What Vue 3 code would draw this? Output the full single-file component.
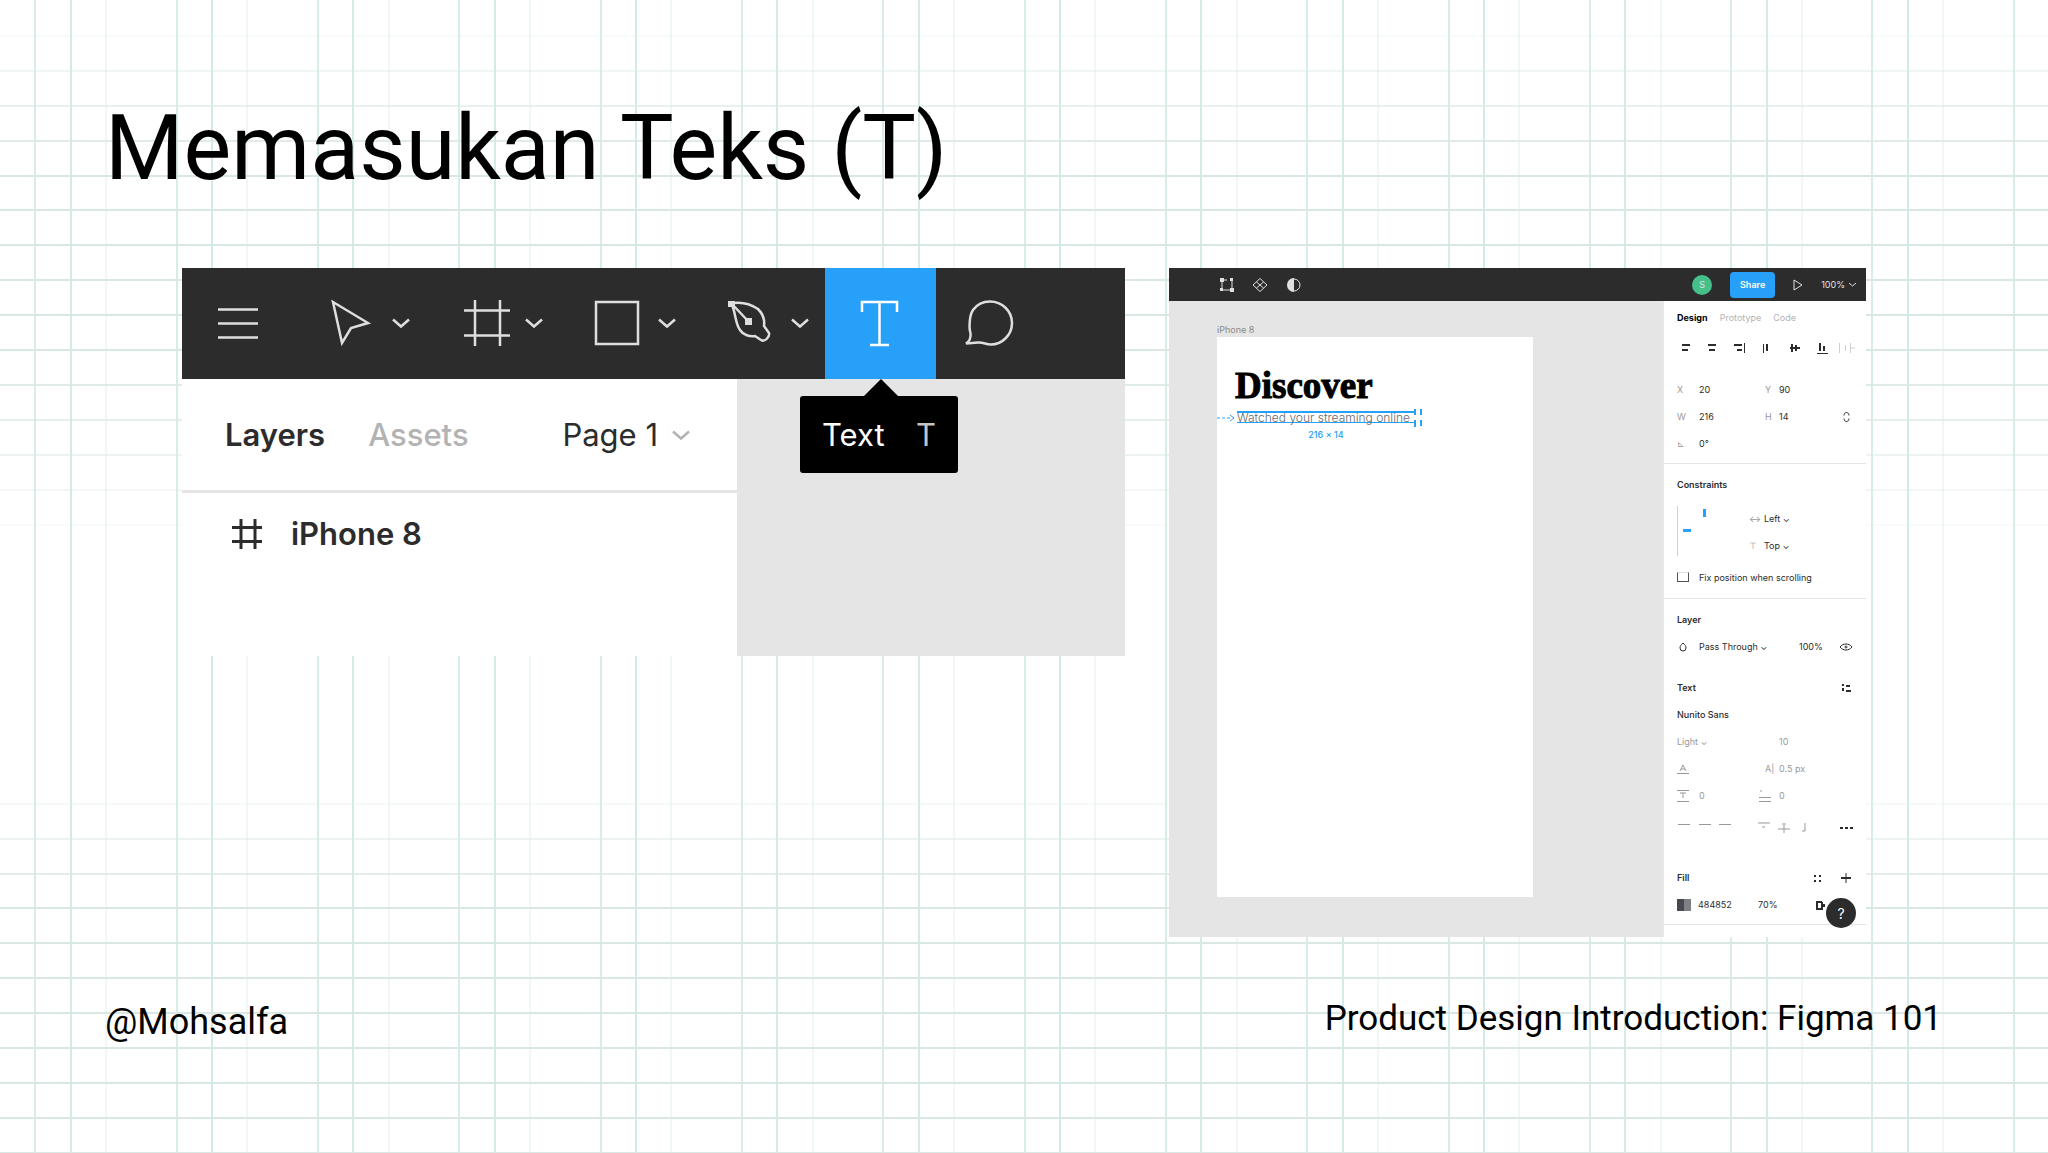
<template>
    <main class="slide">
        <svg class="grid-paper" viewBox="0 0 2048 1153" preserveAspectRatio="none" aria-hidden="true">
            <rect v-for="line in columns" :key="'c' + line.pos" :x="line.pos" y="0" width="2" height="1153"
                fill="#d3ebe7" :opacity="line.opacity" />
            <rect v-for="line in rows" :key="'r' + line.pos" x="0" :y="line.pos" width="2048" height="2"
                fill="#d9e7e5" :opacity="line.opacity" />
        </svg>

        <h1 class="title">Memasukan Teks (T)</h1>

        <div class="shots">
            <section class="editor">
                <div class="toolbar">
                    <button class="tool tool-menu" aria-label="Menu">
                        <svg class="icon" viewBox="0 0 48 48">
                            <path d="M4 10.5h40M4 24.5h40M4 38.5h40" />
                        </svg>
                    </button>
                    <button v-for="tool in tools" :key="tool.name" class="tool tool-group" :aria-label="tool.name">
                        <svg class="icon" viewBox="0 0 48 48">
                            <path :d="tool.path" />
                            <path v-if="tool.solid" class="solid" :d="tool.solid" />
                        </svg>
                        <svg class="chevron" viewBox="0 0 18 10">
                            <path d="M1 1.5l8 7 8-7" />
                        </svg>
                    </button>
                    <button class="tool tool-active" aria-label="Text">
                        <svg class="icon" viewBox="0 0 48 48">
                            <path d="M5 13V3h35v10M22.5 3v43M13 46h19" />
                        </svg>
                        <span class="tooltip">
                            <span>Text</span>
                            <span class="tooltip-key">T</span>
                        </span>
                    </button>
                    <button class="tool tool-comment" aria-label="Comment">
                        <svg class="icon" viewBox="0 0 48 48">
                            <path d="M-2 44.500C2 42 3 38 2.500 34 1 30 1 17 5 11 10 4 16 2.500 22 2.500 34 2.500 44 12 44 24S34 45.500 23 45.500C18 45.500 15 43 10 43.500z" />
                        </svg>
                    </button>
                </div>
                <div class="editor-body">
                    <div class="layers">
                        <div class="layers-tabs">
                            <button class="tab tab-current">Layers</button>
                            <button class="tab">Assets</button>
                            <button class="tab tab-page">
                                Page 1
                                <svg class="chevron" viewBox="0 0 18 10">
                                    <path d="M1 1.5l8 7 8-7" />
                                </svg>
                            </button>
                        </div>
                        <div class="layer">
                            <svg class="layer-icon" viewBox="0 0 30 30">
                                <path d="M0 8.5h30M0 22.5h30M9 0v30M23 0v30" />
                            </svg>
                            iPhone 8
                        </div>
                    </div>
                    <div class="stage"></div>
                </div>
            </section>

            <section class="figma">
                <div class="bar">
                    <svg class="bar-icons" viewBox="0 0 82 16">
                        <path d="M3 4v8M4 13h8M13 3v9M4 3h4" />
                        <path class="fill" d="M1 1h4v4H1zM1 11h3v3H1zM11 11h4v4h-4zM11 1h3v3h-3z" />
                        <path d="M41 1.5l7 6.5-7 6.5L34 8zM37.5 5l7 6M44.5 5l-7 6" />
                        <circle cx="75" cy="8" r="6" />
                        <path class="fill" d="M75 1a7 7 0 0 0 0 14z" />
                    </svg>
                    <span class="avatar">S</span>
                    <button class="share">Share</button>
                    <svg class="play" viewBox="0 0 10 12">
                        <path d="M1 1l8 5-8 5z" />
                    </svg>
                    <button class="zoom">
                        100%
                        <svg class="chevron-small" viewBox="0 0 7 4">
                            <path d="M0 0l3.5 3L7 0" />
                        </svg>
                    </button>
                </div>
                <div class="figma-body">
                    <div class="canvas">
                        <span class="frame-name">iPhone 8</span>
                        <div class="frame">
                            <h2 class="discover">Discover</h2>
                            <p class="selection">
                                Watched your streaming online
                                <svg class="arrow" viewBox="0 0 18 8">
                                    <path d="M0 4h13" stroke-dasharray="3 2" />
                                    <path d="M13 1l4 3-4 3" />
                                </svg>
                                <svg class="handles" viewBox="0 0 10 20">
                                    <path d="M2 1v6M8 1v6M2 12v7M8 12v6" />
                                </svg>
                            </p>
                            <span class="dimensions">216 × 14</span>
                        </div>
                    </div>

                    <aside class="inspector">
                        <section class="group">
                            <div class="inspector-tabs">
                                <button class="strong">Design</button>
                                <button>Prototype</button>
                                <button>Code</button>
                            </div>
                            <svg class="align" viewBox="0 0 178 12">
                                <path class="bold" d="M5 3h8M5 8h6M31 3h8M32 8h6M57 3h8M60 8h5M90 2v7M113 6h10M115 2v8M119 3v6M143 1v8M147 4v5" />
                                <path d="M67.5 1v10M86.5 2v9M140 11.5h11" />
                                <path class="pale" d="M162.5 1v10M168.5 3v6M173.5 1v10M174 6h4" />
                            </svg>
                            <div class="row">
                                <label class="hint" for="pos-x">X</label>
                                <input id="pos-x" v-model="box.x" />
                                <label class="hint" for="pos-y">Y</label>
                                <input id="pos-y" v-model="box.y" />
                            </div>
                            <div class="row">
                                <label class="hint" for="size-w">W</label>
                                <input id="size-w" v-model="box.w" />
                                <label class="hint" for="size-h">H</label>
                                <input id="size-h" v-model="box.h" />
                                <svg class="glyph" viewBox="0 0 12 12">
                                    <path d="M3 4.500c0-4 5-4 5 0M3 7.500c0 4 5 4 5 0" />
                                </svg>
                            </div>
                            <div class="row">
                                <label class="hint" for="angle">⊾</label>
                                <input id="angle" v-model="box.angle" />
                            </div>
                        </section>

                        <section class="group group-constraints">
                            <h3>Constraints</h3>
                            <div class="constraints">
                                <svg class="constraint-box" viewBox="0 0 54 52">
                                    <path class="pale" d="M.5 1v50" />
                                    <path class="blue" d="M27.5 4v8M6 25.5h8" />
                                </svg>
                                <div class="constraint-fields">
                                    <label>
                                        <span class="hint">↔</span>
                                        <select aria-label="Horizontal">
                                            <option>Left ⌄</option>
                                        </select>
                                    </label>
                                    <label>
                                        <span class="hint">⊤</span>
                                        <select aria-label="Vertical">
                                            <option>Top ⌄</option>
                                        </select>
                                    </label>
                                </div>
                            </div>
                            <label class="fix">
                                <input v-model="fixed" type="checkbox" />
                                Fix position when scrolling
                            </label>
                        </section>

                        <section class="group group-plain">
                            <h3>Layer</h3>
                            <div class="row row-layer">
                                <svg class="glyph" viewBox="0 0 12 12">
                                    <path d="M6 2c2 2 3 3 3 5a3 3 0 0 1-6 0c0-2 1-3 3-5z" />
                                </svg>
                                <select aria-label="Blend mode">
                                    <option>Pass Through ⌄</option>
                                </select>
                                <input v-model="opacity" aria-label="Opacity" />
                                <svg class="glyph" viewBox="0 0 12 12">
                                    <path d="M0 6c3-4 9-4 12 0-3 4-9 4-12 0z" />
                                    <circle cx="6" cy="6" r="1" />
                                </svg>
                            </div>
                        </section>

                        <section class="group group-plain">
                            <div class="row row-head">
                                <h3>Text</h3>
                                <svg class="glyph" viewBox="0 0 12 12">
                                    <path class="bold" d="M3 2v2M3 6v3M6 4h4M6 9h5" />
                                </svg>
                            </div>
                            <div class="row row-name">Nunito Sans</div>
                            <div class="row row-pale">
                                <select class="wide" aria-label="Weight">
                                    <option>Light ⌄</option>
                                </select>
                                <span></span>
                                <input v-model="type.size" aria-label="Font size" />
                            </div>
                            <div class="row row-pale">
                                <svg class="glyph" viewBox="0 0 12 12">
                                    <path d="M3 8l3-6 3 6M4 6h4M0 10.5h12" />
                                </svg>
                                <span></span>
                                <label for="spacing">A|</label>
                                <input id="spacing" v-model="type.spacing" />
                            </div>
                            <div class="row row-pale">
                                <svg class="glyph" viewBox="0 0 12 12">
                                    <path d="M0 .5h12M0 11.5h12M3 3h6M6 3v5" />
                                </svg>
                                <input v-model="type.gap" aria-label="Paragraph gap" />
                                <svg class="glyph glyph-out" viewBox="0 0 12 12">
                                    <path d="M1 1h2M0 7.5h12M0 11.5h12" />
                                </svg>
                                <input v-model="type.indent" aria-label="Indent" />
                            </div>
                            <svg class="align text-align" viewBox="0 0 178 12">
                                <path class="mid" d="M1 3.5h12M22 3.5h12M42 3.5h12M81 2h12M85 6h3M101 8h12M107 4v8M105 3h4M128 2v8M125 10h3" />
                                <path class="dots" d="M163 7h3M168 7h3M173 7h3" />
                            </svg>
                        </section>

                        <section class="group group-fill">
                            <div class="row row-head">
                                <h3>Fill</h3>
                                <svg class="glyph glyph-wide" viewBox="0 0 40 12">
                                    <path class="dots" d="M2 4h2M7 4h2M2 9h2M7 9h2M29 6h10" />
                                    <path d="M34 1v10" />
                                </svg>
                            </div>
                            <div class="row row-fill">
                                <span class="swatch"></span>
                                <input v-model="fill.color" aria-label="Fill colour" />
                                <input v-model="fill.alpha" aria-label="Fill opacity" />
                                <svg class="glyph" viewBox="0 0 12 12">
                                    <path class="bold" d="M1 3h6M2 3v7h5V3M9 5v3" />
                                </svg>
                            </div>
                            <button class="help">?</button>
                        </section>
                    </aside>
                </div>
            </section>
        </div>

        <footer class="footer">
            <span>@Mohsalfa</span>
            <span class="course">Product Design Introduction: Figma 101</span>
        </footer>
    </main>
</template>

<script setup>
import { reactive, ref } from 'vue';

const tools = [
    { name: 'Move', path: 'M3 3l35 21-17 5-9 15z' },
    { name: 'Frame', path: 'M1 11.5h46M1 36.5h46M12 1v46M37 1v46' },
    { name: 'Rectangle', path: 'M0 3h42v42H0z' },
    {
        name: 'Pen',
        path: 'M3 5l16 17M5 4c9-1 18 2 24 6 5 5 7 10 6 17l5 7c1 5-5 9-8 7l-6-4c-5 1-12-1-15-6C6 24 7 15 3 6',
        solid: 'M-1 2h7v6h-7zM16 19h7v7h-7z'
    }
];

const box = reactive({ x: '20', y: '90', w: '216', h: '14', angle: '0°' });
const type = reactive({ size: '10', spacing: '0.5 px', gap: '0', indent: '0' });
const fill = reactive({ color: '484852', alpha: '70%' });
const opacity = ref('100%');
const fixed = ref(false);

// vertical lines come in fours: two strong, one faint, one missing
const strength = [0, 0.9, 1, 0.35];
const columns = [];
for (let i = 1; i < 58; i++) {
    const value = strength[i % 4];
    if (value) {
        columns.push({ pos: Math.round(i * 35.33) - 1, opacity: value });
    }
}

// horizontal lines fade out around the middle of the paper
const rows = [];
for (let i = 1; i < 34; i++) {
    const pos = Math.round(i * 34.9);
    let value = 1;
    if (i < 5) value = i / 5;
    if (i > 10) value = Math.max(0, 1 - (i - 10) / 6);
    if (i > 22) value = Math.min(1, (i - 22) / 4);
    if (value > 0) {
        rows.push({ pos, opacity: value });
    }
}
</script>

<style>
body {
    margin: 0;
    background: #fff;
}
</style>

<style scoped>
* {
    box-sizing: border-box;
}

.slide {
    position: relative;
    display: flex;
    flex-direction: column;
    min-height: 100vh;
    overflow: hidden;
    color: #000;
    font-family: Roboto, sans-serif;
}

svg {
    display: block;
    flex: none;
    overflow: visible;
    fill: none;
    stroke: currentColor;
}

.grid-paper {
    position: absolute;
    inset: 0;
    z-index: -1;
    width: 100%;
    height: 100%;
    stroke: none;
}

button,
input,
select {
    margin: 0;
    padding: 0;
    border: 0;
    background: none;
    color: inherit;
    font: inherit;
}

select {
    appearance: none;
}

input {
    width: 100%;
    min-width: 0;
}

h1,
h2,
h3,
p {
    margin: 0;
}

.title {
    padding: 96px 105px 67px;
    font-size: 90px;
    font-weight: 400;
    line-height: 105px;
}

.shots {
    display: grid;
    grid-template-columns: 943fr 697fr;
    align-items: start;
    gap: 44px;
    padding: 0 182px;
}

/* zoomed-in editor */
.editor {
    background: #fff;
    color: #2c2c2c;
    font-family: Inter, sans-serif;
    font-size: 31px;
}

.toolbar {
    display: flex;
    height: 111px;
    background: #2c2c2c;
    color: #dedede;
}

.tool {
    position: relative;
    display: flex;
    align-items: center;
    justify-content: center;
    width: 111px;
    padding-bottom: 2px;
}

.tool-group {
    justify-content: flex-start;
    gap: 14px;
    width: 133px;
    padding-left: 37px;
}

.tool-active {
    background: #26a0f8;
    color: #fff;
}

.icon {
    width: 48px;
    height: 48px;
    stroke-width: 2.5;
}

.solid {
    fill: currentColor;
    stroke: none;
}

.chevron {
    width: 18px;
    height: 10px;
    stroke-width: 2.5;
}

.tooltip {
    position: absolute;
    top: 128px;
    left: -25px;
    z-index: 1;
    display: flex;
    align-items: center;
    justify-content: space-between;
    width: 158px;
    height: 77px;
    padding: 0 22px;
    border-radius: 3px;
    background: #000;
    color: #fff;
}

.tooltip::before {
    content: '';
    position: absolute;
    top: -17px;
    left: 64px;
    border: 17px solid transparent;
    border-top: 0;
    border-bottom-color: #000;
}

.tooltip-key {
    color: #c4c4c4;
}

.editor-body {
    display: grid;
    grid-template-columns: 555fr 388fr;
    min-height: 277px;
}

.stage {
    background: #e5e5e5;
}

.layers-tabs {
    display: flex;
    align-items: center;
    height: 114px;
    padding: 0 47px 0 43px;
    border-bottom: 3px solid #e5e5e5;
}

.tab {
    margin-right: 43px;
    color: #b3b3b3;
    font-weight: 500;
}

.tab-current {
    color: #2c2c2c;
    font-weight: 600;
}

.tab-page {
    display: flex;
    align-items: center;
    gap: 14px;
    margin: 0 0 0 auto;
    color: #2c2c2c;
    font-weight: 400;
}

.tab-page .chevron {
    color: #b3b3b3;
}

.layer {
    display: flex;
    align-items: center;
    gap: 29px;
    height: 81px;
    padding-left: 50px;
    font-weight: 600;
}

.layer-icon {
    width: 30px;
    height: 30px;
    stroke-width: 3;
}

/* full figma window */
.figma {
    background: #fff;
    font-family: Inter, sans-serif;
    font-size: 9px;
}

.bar {
    display: flex;
    align-items: center;
    height: 33px;
    padding: 0 10px 0 50px;
    background: #2c2c2c;
    color: #e0e0e0;
}

.bar-icons {
    width: 82px;
    height: 16px;
}

.fill {
    fill: currentColor;
    stroke: none;
}

.avatar {
    width: 20px;
    margin-left: auto;
    border-radius: 50%;
    background: #45c08a;
    line-height: 20px;
    text-align: center;
}

.share {
    width: 45px;
    height: 26px;
    margin: 0 18px;
    border-radius: 4px;
    background: #26a0f8;
    color: #fff;
    font-weight: 600;
}

.play {
    width: 10px;
    height: 12px;
}

.zoom {
    display: flex;
    align-items: center;
    gap: 4px;
    margin-left: 18px;
}

.chevron-small {
    width: 7px;
    height: 4px;
}

.figma-body {
    display: grid;
    grid-template-columns: 1fr 204px;
}

.canvas {
    display: flex;
    flex-direction: column;
    padding: 21px 129px 40px 48px;
    background: #e5e5e5;
}

.frame-name {
    color: #8a8a8a;
    line-height: 15px;
}

.frame {
    flex: 1;
    padding: 28px 18px;
    background: #fff;
}

.discover {
    font-family: "Liberation Serif", serif;
    font-size: 37px;
    font-weight: 700;
    line-height: 42px;
    -webkit-text-stroke: 1px #000;
}

.selection {
    position: relative;
    width: 178px;
    height: 12px;
    margin: 4px 0 0 2px;
    border-top: 2px solid #26a0f8;
    border-bottom: 1px solid #26a0f8;
    color: #6b6b6b;
    font-size: 12px;
    font-weight: 300;
    line-height: 9px;
    white-space: nowrap;
}

.arrow {
    position: absolute;
    top: 1px;
    left: -20px;
    width: 18px;
    height: 8px;
    color: #26a0f8;
}

.handles {
    position: absolute;
    top: -5px;
    right: -8px;
    width: 10px;
    height: 20px;
    color: #26a0f8;
    stroke-width: 2;
}

.dimensions {
    display: block;
    width: 182px;
    padding-top: 6px;
    color: #26a0f8;
    font-weight: 500;
    line-height: 12px;
    text-align: center;
}

.inspector {
    border-left: 2px solid #e8e8e8;
    color: #2c2c2c;
}

.group {
    position: relative;
    padding: 7px 0 6px 13px;
    border-bottom: 1px solid #e5e5e5;
}

.group:first-child {
    padding-top: 0;
}

.group-constraints {
    padding-bottom: 3px;
}

.group-plain {
    border-bottom-color: transparent;
}

h3 {
    font-size: 9px;
    font-weight: 600;
    line-height: 27px;
}

.inspector-tabs {
    display: flex;
    gap: 12px;
    height: 33px;
    color: #b3b3b3;
}

.inspector-tabs .strong {
    color: #000;
    font-weight: 700;
}

.align {
    width: 178px;
    height: 12px;
    margin: 8px 0 22px;
}

.text-align {
    margin: 12px 0 17px;
}

.bold,
.dots {
    stroke-width: 2;
}

.pale {
    color: #cfcfcf;
}

.mid {
    color: #999;
}

.blue {
    color: #26a0f8;
    stroke-width: 3;
}

.row {
    display: grid;
    grid-template-columns: 22px 66px 14px 62px 1fr;
    align-items: center;
    height: 27px;
}

.hint,
.row-pale {
    color: #999;
}

.row-layer {
    grid-template-columns: 22px 100px 41px 1fr;
}

.row-head {
    display: flex;
    justify-content: space-between;
    padding-right: 14px;
}

.row-name {
    display: flex;
    font-weight: 500;
}

.wide {
    grid-column: span 2;
}

.row-fill {
    grid-template-columns: 21px 60px 57px 1fr;
}

.glyph {
    width: 12px;
    height: 12px;
}

.glyph-out {
    margin-left: -6px;
}

.glyph-wide {
    width: 40px;
}

.constraints {
    display: flex;
    gap: 18px;
    padding-top: 7px;
}

.constraint-box {
    width: 54px;
    height: 52px;
}

.constraint-fields label {
    display: grid;
    grid-template-columns: 15px 1fr;
    align-items: center;
    height: 27px;
}

.fix {
    display: flex;
    align-items: center;
    gap: 10px;
    height: 36px;
}

.fix input {
    appearance: none;
    width: 12px;
    height: 10px;
    border: 1px solid #555;
    border-top-color: #ddd;
}

.swatch {
    width: 14px;
    height: 12px;
    background: linear-gradient(90deg, #484852 50%, #7d8184 50%);
}

.group-fill {
    margin-bottom: 12px;
}

.help {
    position: absolute;
    right: 10px;
    bottom: -4px;
    width: 30px;
    height: 30px;
    border-radius: 50%;
    background: #2c2c2c;
    color: #fff;
    font-size: 14px;
}

.footer {
    display: flex;
    align-items: flex-start;
    justify-content: space-between;
    padding: 62px 106px 0 105px;
    font-size: 36px;
    line-height: 46px;
}

.course {
    font-size: 35px;
    line-height: 40px;
}
</style>
